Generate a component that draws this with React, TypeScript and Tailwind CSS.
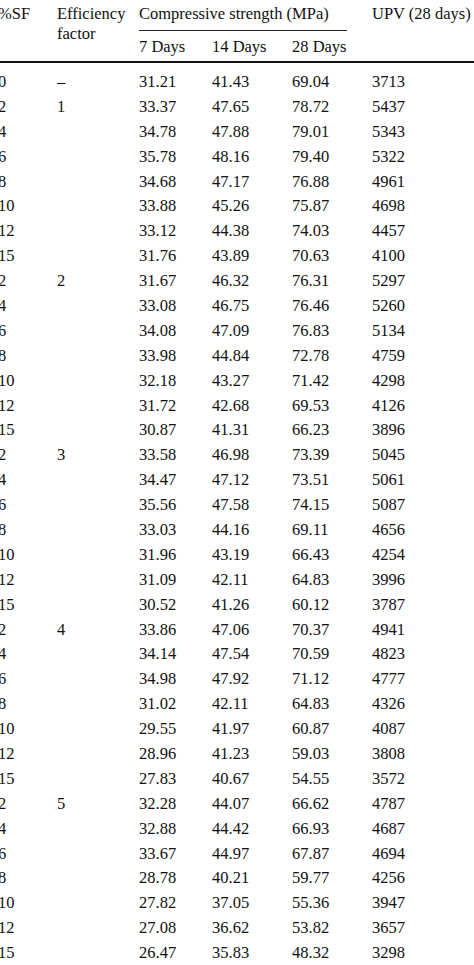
const groups: [string, string[][]][] = [
  ["1", [
    ["33.37", "47.65", "78.72", "5437"],
    ["34.78", "47.88", "79.01", "5343"],
    ["35.78", "48.16", "79.40", "5322"],
    ["34.68", "47.17", "76.88", "4961"],
    ["33.88", "45.26", "75.87", "4698"],
    ["33.12", "44.38", "74.03", "4457"],
    ["31.76", "43.89", "70.63", "4100"],
  ]],
  ["2", [
    ["31.67", "46.32", "76.31", "5297"],
    ["33.08", "46.75", "76.46", "5260"],
    ["34.08", "47.09", "76.83", "5134"],
    ["33.98", "44.84", "72.78", "4759"],
    ["32.18", "43.27", "71.42", "4298"],
    ["31.72", "42.68", "69.53", "4126"],
    ["30.87", "41.31", "66.23", "3896"],
  ]],
  ["3", [
    ["33.58", "46.98", "73.39", "5045"],
    ["34.47", "47.12", "73.51", "5061"],
    ["35.56", "47.58", "74.15", "5087"],
    ["33.03", "44.16", "69.11", "4656"],
    ["31.96", "43.19", "66.43", "4254"],
    ["31.09", "42.11", "64.83", "3996"],
    ["30.52", "41.26", "60.12", "3787"],
  ]],
  ["4", [
    ["33.86", "47.06", "70.37", "4941"],
    ["34.14", "47.54", "70.59", "4823"],
    ["34.98", "47.92", "71.12", "4777"],
    ["31.02", "42.11", "64.83", "4326"],
    ["29.55", "41.97", "60.87", "4087"],
    ["28.96", "41.23", "59.03", "3808"],
    ["27.83", "40.67", "54.55", "3572"],
  ]],
  ["5", [
    ["32.28", "44.07", "66.62", "4787"],
    ["32.88", "44.42", "66.93", "4687"],
    ["33.67", "44.97", "67.87", "4694"],
    ["28.78", "40.21", "59.77", "4256"],
    ["27.82", "37.05", "55.36", "3947"],
    ["27.08", "36.62", "53.82", "3657"],
    ["26.47", "35.83", "48.32", "3298"],
  ]],
];

const sf = ["2", "4", "6", "8", "10", "12", "15"];

const rows: string[][] = [["0", "–", "31.21", "41.43", "69.04", "3713"]];
groups.forEach(([factor, vals]) => {
  vals.forEach((v, i) => rows.push([sf[i], i === 0 ? factor : "", ...v]));
});

const cols = "grid grid-cols-[59px_82px_73px_80px_80px_1fr]";

export default function App() {
  return (
    <div className="w-[474px] h-[965px] overflow-hidden bg-white text-[#111] font-['Liberation_Serif',serif] text-[16.5px] leading-[20px]">
      <div className="-ml-[2px] w-[480px]">
        {/* header */}
        <div className={`${cols} h-[61px] pt-[4px]`}>
          <div>%SF</div>
          <div>
            Efficiency
            <br />
            factor
          </div>
          <div className="col-span-3">
            <div className="w-[208px] border-b border-[#222] pb-[5.5px] whitespace-nowrap">
              Compressive strength (MPa)
            </div>
            <div className="grid grid-cols-[73px_80px_80px] pt-[6px] whitespace-nowrap">
              <div>7 Days</div>
              <div>14 Days</div>
              <div>28 Days</div>
            </div>
          </div>
          <div className="whitespace-nowrap">UPV (28 days) (m/s)</div>
        </div>

        <div className="border-t-2 border-[#111] pt-[6.5px]">
          {rows.map((r, i) => (
            <div key={i} className={`${cols} h-[24.9px] items-center`}>
              {r.map((c, j) => (
                <div key={j}>{c}</div>
              ))}
            </div>
          ))}
        </div>
      </div>
    </div>
  );
}
